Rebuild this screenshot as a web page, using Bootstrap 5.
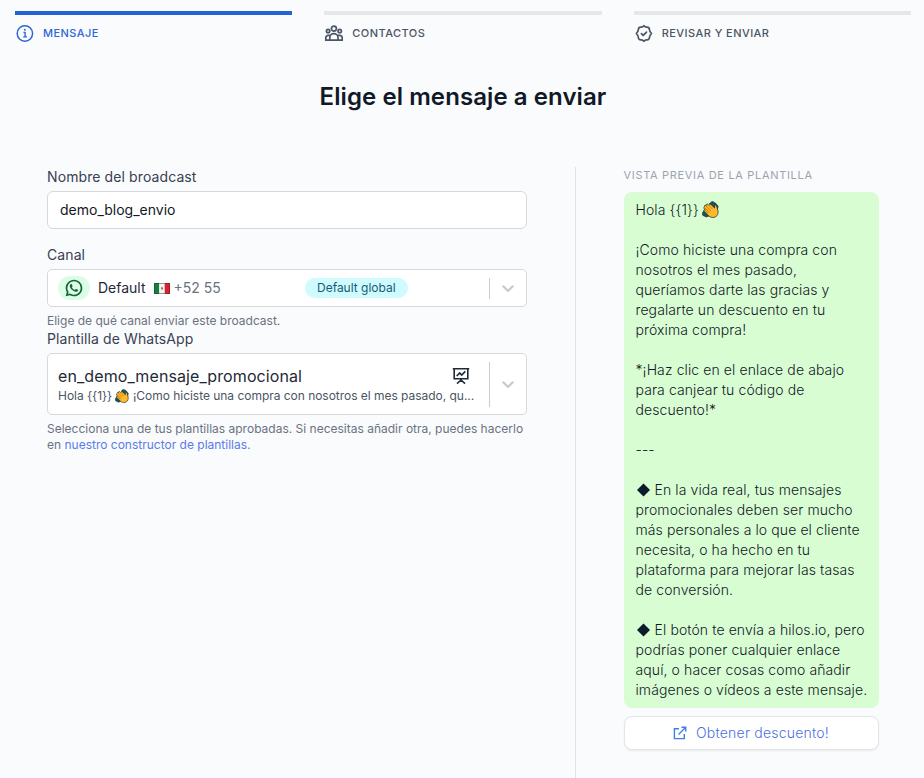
<!DOCTYPE html>
<html lang="es">
<head>
<meta charset="utf-8">
<meta name="viewport" content="width=device-width, initial-scale=1">
<title>Elige el mensaje a enviar</title>
<link href="https://cdn.jsdelivr.net/npm/bootstrap@5.3.0/dist/css/bootstrap.min.css" rel="stylesheet">
<style>
body{font-family:Inter,"Open Sans",sans-serif;font-size:14px;line-height:20px;background:#f9fbfd;color:#111827;height:778px;overflow:hidden}
svg{display:block;flex:none}
.page{padding:11px 13px 0 15px;height:778px}
.steps{gap:32px}
.step{flex:1 1 0;border-top:4px solid #e5e7eb;padding:6px 0 0;height:34px;color:#4b5563;font-size:11px;font-weight:500;letter-spacing:.44px}
.step.current{border-color:#2563d4;color:#2f66d6}
.step svg{width:19px;height:19px;margin-right:9px}
.title{font-size:24px;line-height:32px;font-weight:600;margin:36px 0 54px;letter-spacing:.08px}
.form-side{width:560.5px;padding:0 48px 0 32px;border-right:1px solid #e0e3e8}
.field-label{color:#374151;height:20px;margin:0;letter-spacing:.1px;font-weight:400}
.channel-label{margin-top:16px}
.box{background:#fff;border:1px solid #d5d8dd;border-radius:5px;width:480px}
input.box{height:38px;border-radius:6px;padding:0 12px 2px;font-size:14px;color:#111827;outline:0;display:block}
.box-chan{height:38px;margin-top:4px;padding-left:10px}
.chan-name{margin-left:8px;color:#1f2937}
.flag{margin-left:8px}
.phone{margin-left:4px;color:#6b7280}
.hint{font-size:12px;line-height:16px;color:#6b7280;margin-top:6px;white-space:nowrap}
.hint a{color:#5b7be8;text-decoration:none}
.wa{width:32px;height:24px;background:#dcfce7;border-radius:12px;color:#166534}
.pill{background:#cffafe;color:#155e75;font-size:12px;line-height:20px;border-radius:10px;width:103px;margin-left:84px}
.caret{width:37px;height:21px;border-left:1px solid #ccc;color:#ccc}
.box-tpl .caret{height:45px}
.box-tpl{height:62px;margin-top:4px;padding-left:10px}
.tpl-col{width:417px}
.board{margin:3px 5px 0 0}
.tpl-name{font-size:16px;line-height:24px;color:#1f2937;letter-spacing:.09px}
.tpl-text{font-size:12px;line-height:16px;color:#4b5563;letter-spacing:-.03px}
.preview{padding-left:48px;width:304px}
.preview-head{font-size:11px;line-height:16px;letter-spacing:.68px;color:#9ca3af;margin-bottom:9px}
.bubble{background:#d9fdd3;border-radius:8px;width:255px;height:516px;padding:8px 4px 8px 12px;white-space:pre-line;color:#111827;font-weight:300;letter-spacing:.1px}
.cta{width:255px;height:34px;border:1px solid #e2e5ea;border-radius:8px;background:#fff;color:#4a72dd;box-shadow:0 1px 2px rgba(0,0,0,.07);margin-top:8px;font-weight:300;letter-spacing:.22px}
.cta svg{margin-right:9px}
.clap{display:inline-block;vertical-align:-3px;margin:0 1px 0 -1px}
.gem{display:inline-block;vertical-align:-2px}
</style>
</head>
<body>
<svg width="0" height="0" class="position-absolute"><defs>
<g id="clap">
<path d="M7 2.500 9.500.4l3 1.400 2.700 3.200-.7 3zM.5 11l1.800-2.400 4.200 5.600-2.500.8L.7 13.500z" fill="#1c5558" stroke="#12333a" stroke-width=".7"/>
<path d="M2.300 5.400c-.5-.9.500-1.800 1.300-1.200l.5.400-.2-.7c0-1 1.200-1.500 1.900-.7l.8.800c0-1 1.200-1.400 1.900-.6l3.300 3.200.1-2c.2-1.200 1.700-1.100 1.900.1l1.300 4.800c.5 3.500-1.700 6-4.900 6-2.300 0-3.500-1-4.900-2.600L1.900 9.700c-.7-.8.100-1.800 1-1.300l-.9-1.200c-.5-.8-.3-1.400.3-1.800z" fill="#ffb92a" stroke="#172b31" stroke-width=".7"/>
<path d="m4 4.700 4.300 4.600M2.900 6.500l4.200 4.600M6.500 4l3.600 3.900M2.900 8.400l3 3.300" stroke="#a86b12" stroke-width=".6" fill="none"/></g>
<path id="chevron" d="M4.516 7.548c.436-.446 1.043-.481 1.576 0L10 11.295l3.908-3.747c.533-.481 1.141-.446 1.574 0 .436.445.408 1.197 0 1.615-.406.418-4.695 4.502-4.695 4.502a1.095 1.095 0 0 1-1.576 0S4.924 9.581 4.516 9.163s-.436-1.170 0-1.615z"/>
</defs></svg>
<main class="page d-flex flex-column">
<nav class="steps d-flex">
  <div class="step current d-flex align-items-center"><svg viewBox="0 0 19 19" fill="none" stroke="currentColor" stroke-width="1.500"><circle cx="9.900" cy="9.500" r="7.700"/><path d="M8.400 8.400h1.700v4.300M8.200 12.900h3.800" stroke-width="1.400"/><circle cx="9.800" cy="5.800" r=".95" fill="currentColor" stroke="none"/></svg>MENSAJE</div>
  <div class="step d-flex align-items-center"><svg viewBox="0 0 19 19" fill="none" stroke="currentColor" stroke-width="1.700"><circle cx="9.900" cy="4.600" r="2.500"/><circle cx="4.100" cy="7" r="1.700"/><circle cx="15.700" cy="7" r="1.700"/><path d="M5.800 16.200v-2.400a4.100 4.100 0 0 1 8.200 0v2.400M6.100 11.400H4.200a2.400 2.400 0 0 0-2.400 2.400v2.400h16.400v-2.400a2.400 2.400 0 0 0-2.400-2.400h-2"/></svg>CONTACTOS</div>
  <div class="step d-flex align-items-center"><svg viewBox="0 0 19 19" fill="none" stroke="currentColor" stroke-width="1.700" stroke-linejoin="round" stroke-linecap="round"><path d="M9.900 1.700Q11.300 3.400 12.800 3.100Q15.300 3 15.500 5.800Q15.500 7.500 17.500 9.500Q15.500 11.500 15.500 13.200Q15.300 16 12.800 15.900Q11.300 15.600 9.900 17.300Q8.500 15.600 7 15.900Q4.500 16 4.300 13.200Q4.300 11.500 2.300 9.500Q4.300 7.500 4.300 5.800Q4.500 3 7 3.100Q8.500 3.400 9.900 1.700Z"/><path d="m7.400 9.600 1.800 1.800 3.300-3.300"/></svg>REVISAR Y ENVIAR</div>
</nav>
<h1 class="title text-center">Elige el mensaje a enviar</h1>
<div class="d-flex flex-grow-1">
<section class="form-side">
  <label class="field-label d-block" for="n">Nombre del broadcast</label>
  <input id="n" class="box mt-1" value="demo_blog_envio">
  <div class="field-label channel-label">Canal</div>
  <div class="box box-chan d-flex align-items-center">
    <span class="wa d-flex align-items-center justify-content-center"><svg width="20" height="20" viewBox="0 0 24 24" fill="currentColor"><path d="M7.253 18.494l.724.423A7.953 7.953 0 0 0 12 20a8 8 0 1 0-8-8c0 1.436.377 2.813 1.084 4.024l.422.724-.653 2.401 2.4-.655zM2.004 22l1.352-4.968A9.954 9.954 0 0 1 2 12C2 6.477 6.477 2 12 2s10 4.477 10 10-4.477 10-10 10a9.954 9.954 0 0 1-5.03-1.355L2.004 22zM8.391 7.308c.134-.01.269-.01.403-.004.054.004.108.01.162.016.159.018.334.115.393.249.298.676.588 1.357.868 2.04.062.152.025.347-.093.537a4.38 4.38 0 0 1-.263.372c-.113.145-.356.411-.356.411s-.099.118-.061.265c.014.056.06.137.102.205l.059.095c.256.427.6.86 1.02 1.268.12.116.237.235.363.346.468.413.998.75 1.57 1l.005.002c.085.037.128.057.252.11.062.026.126.049.191.066a.35.35 0 0 0 .367-.13c.724-.877.79-.934.796-.934v.002a.482.482 0 0 1 .378-.127c.06.004.121.015.177.04.531.243 1.4.622 1.4.622l.582.261c.098.047.187.158.19.265.004.067.01.175-.013.373-.032.259-.11.57-.188.733a1.155 1.155 0 0 1-.21.302 2.378 2.378 0 0 1-.33.288 5.024 5.024 0 0 1-.508.31 1.99 1.99 0 0 1-.833.23c-.185.01-.37.024-.556.014-.008 0-.568-.087-.568-.087a9.448 9.448 0 0 1-3.84-2.046c-.226-.199-.435-.413-.649-.626-.89-.885-1.562-1.84-1.97-2.742A3.47 3.47 0 0 1 6.9 9.62a2.729 2.729 0 0 1 .564-1.68c.073-.094.142-.192.261-.305.127-.12.207-.184.294-.228a.961.961 0 0 1 .371-.1z"/></svg></span>
    <span class="chan-name">Default</span>
    <svg class="flag" width="16" height="11" viewBox="0 0 16 11"><path fill="#15803d" d="M0 0h5.300v11H0z"/><path fill="#f3f4f4" d="M5.300 0h5.400v11H5.300z"/><path fill="#dc1f2e" d="M10.700 0H16v11h-5.300z"/><path d="M.5.5h15v10H.5z" fill="none" stroke="#26352c" stroke-opacity=".45"/><path d="M7 4.500 8.500 4l.8 1.600-.8 1.200-1.400-.5z" fill="#98705a"/></svg>
    <span class="phone">+52 55</span>
    <span class="pill text-center">Default global</span>
    <span class="caret d-flex align-items-center justify-content-center ms-auto"><svg width="20" height="20" viewBox="0 0 20 20" fill="currentColor"><use href="#chevron"/></svg></span>
  </div>
  <div class="hint">Elige de qué canal enviar este broadcast.</div>
  <div class="field-label">Plantilla de WhatsApp</div>
  <div class="box box-tpl d-flex align-items-center">
    <div class="tpl-col">
      <div class="tpl-name d-flex justify-content-between"><span>en_demo_mensaje_promocional</span><svg class="board" width="18" height="18" viewBox="0 0 18 18" fill="none" stroke="#1f2937" stroke-width="1.600"><path d="M.8 1.700h16.400M2.200 2v9.800h13.600V2M9 12v2M9 13l-4 3.600M9 13l4 3.600M4.700 9l3-3 2 2 3.600-3.600"/></svg></div>
      <div class="tpl-text text-nowrap">Hola {{1}} <svg class="clap" width="14" height="14" viewBox="0 0 16 16"><use href="#clap"/></svg> ¡Como hiciste una compra con nosotros el mes pasado, qu...</div>
    </div>
    <span class="caret d-flex align-items-center justify-content-center ms-auto"><svg width="20" height="20" viewBox="0 0 20 20" fill="currentColor"><use href="#chevron"/></svg></span>
  </div>
  <div class="hint">Selecciona una de tus plantillas aprobadas. Si necesitas añadir otra, puedes hacerlo<br>en <a href="#">nuestro constructor de plantillas.</a></div>
</section>
<aside class="preview">
  <div class="preview-head">VISTA PREVIA DE LA PLANTILLA</div>
  <div class="bubble">Hola {{1}} <svg class="clap" width="17" height="17" viewBox="0 0 16 16"><use href="#clap"/></svg>

¡Como hiciste una compra con
nosotros el mes pasado,
queríamos darte las gracias y
regalarte un descuento en tu
próxima compra!

*¡Haz clic en el enlace de abajo
para canjear tu código de
descuento!*

---

<svg class="gem" width="15" height="14" viewBox="0 0 15 14"><path d="m7.500.5 6.500 6.500-6.500 6.500L1 7z" fill="#0b1b2b"/></svg> En la vida real, tus mensajes
promocionales deben ser mucho
más personales a lo que el cliente
necesita, o ha hecho en tu
plataforma para mejorar las tasas
de conversión.

<svg class="gem" width="15" height="14" viewBox="0 0 15 14"><path d="m7.500.5 6.500 6.500-6.500 6.500L1 7z" fill="#0b1b2b"/></svg> El botón te envía a hilos.io, pero
podrías poner cualquier enlace
aquí, o hacer cosas como añadir
imágenes o vídeos a este mensaje.</div>
  <div class="cta d-flex align-items-center justify-content-center"><svg width="14" height="14" viewBox="0 0 14 14" fill="none" stroke="#3f7fdd" stroke-width="1.400"><path d="M6 2.700H1.400v9.900h9.900V8M8.500 1.300h4.200v4.200M12.500 1.500 5.500 8.500"/></svg>Obtener descuento!</div>
</aside>
</div>
</main>
<script src="https://cdn.jsdelivr.net/npm/bootstrap@5.3.0/dist/js/bootstrap.bundle.min.js"></script>
</body>
</html>
